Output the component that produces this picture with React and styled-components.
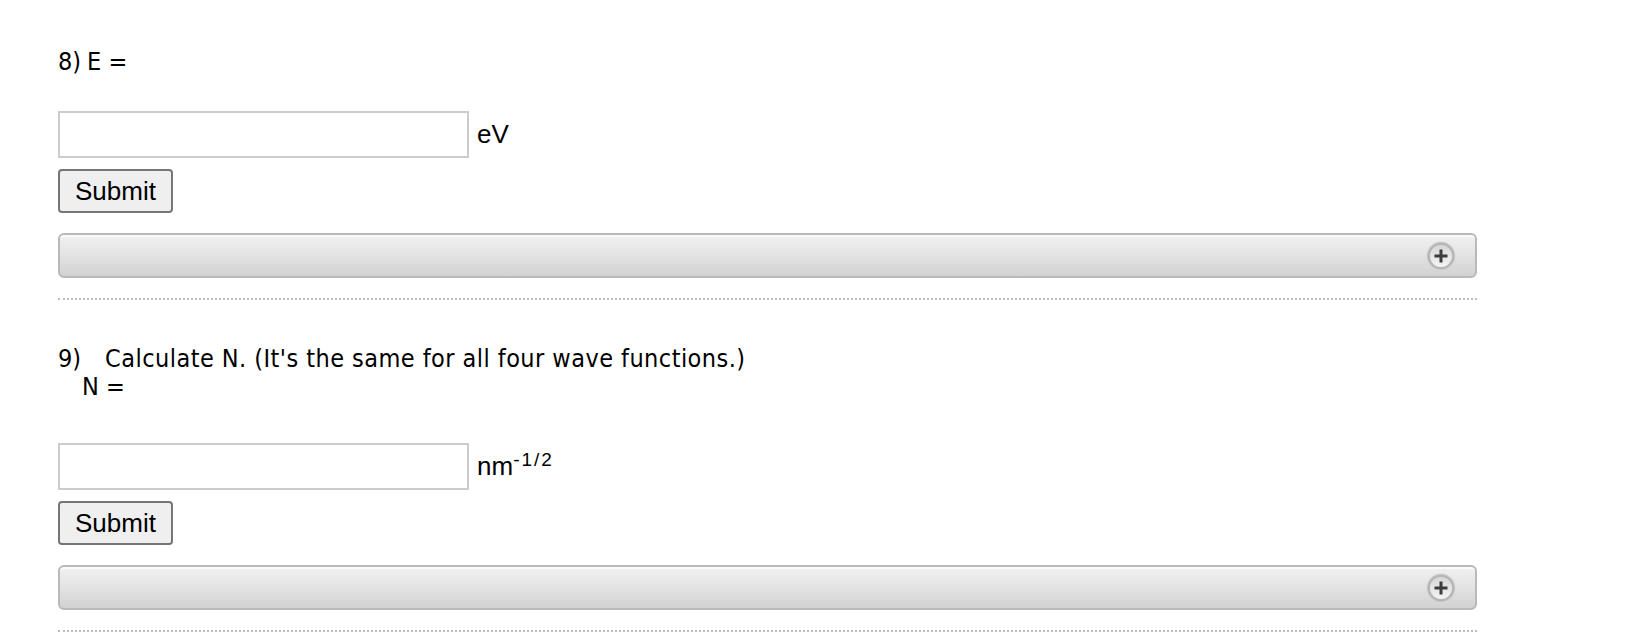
import React from 'react'
import styled, { createGlobalStyle } from 'styled-components'

const GlobalStyle = createGlobalStyle`
  html, body {
    margin: 0;
    padding: 0;
    background: #ffffff;
  }
  body {
    font-family: "DejaVu Sans Condensed", "DejaVu Sans", sans-serif;
    color: #000;
  }
`

const Page = styled.div`
  width: 1419px;
  padding: 48px 0 0 58px;
`

const Question = styled.div`
  display: flex;
  flex-direction: column;
  align-items: flex-start;
  padding-top: ${props => props.gap || 0}px;
`

const Prompt = styled.div`
  font-family: "DejaVu Sans Condensed", "DejaVu Sans", sans-serif;
  font-size: 25px;
  line-height: 28px;
  color: #000;
`

const Number = styled.span`
  display: inline-block;
  margin-right: ${props => props.space || 6}px;
`

const Text = styled.span`
  letter-spacing: ${props => (props.wide ? '0.45px' : '0')};
`

const SubLine = styled.div`
  padding-left: 24px;
`

const AnswerRow = styled.div`
  display: flex;
  align-items: center;
  margin-top: ${props => props.top}px;
`

const Input = styled.input`
  box-sizing: border-box;
  width: 411px;
  height: 47px;
  margin: 0;
  border: 2px solid #cccccc;
  border-radius: 0;
  background: #fff;
  outline: none;
`

const Unit = styled.span`
  font-family: "Liberation Sans", Arial, sans-serif;
  font-size: 26px;
  margin-left: 8px;
  color: #000;
`

const Sup = styled.sup`
  font-size: 19px;
  letter-spacing: 2px;
  vertical-align: 9px;
  line-height: 0;
`

const SubmitButton = styled.button`
  box-sizing: border-box;
  height: 44px;
  margin-top: 11px;
  padding: 0 15px;
  font-family: "Liberation Sans", Arial, sans-serif;
  font-size: 26px;
  color: #000;
  background: #efefef;
  border: 2px solid #767676;
  border-radius: 4px;
  cursor: pointer;
`

const HintBar = styled.div`
  box-sizing: border-box;
  align-self: stretch;
  height: 45px;
  margin-top: 20px;
  display: flex;
  align-items: center;
  justify-content: flex-end;
  padding-right: 19px;
  border: 2px solid #b9b9b9;
  border-radius: 6px;
  background: linear-gradient(to bottom, #f1f1f1 0%, #e4e4e4 45%, #d2d2d2 100%);
  box-shadow: inset 0 2px 0 #fafafa;
`

const Divider = styled.div`
  align-self: stretch;
  margin-top: 20px;
  border-top: 2px dotted #bdbdbd;
`

const PlusIcon = () => (
  <svg width="30" height="30" viewBox="0 0 30 30">
    <defs>
      <radialGradient id="ring" cx="50%" cy="50%" r="50%">
        <stop offset="0%" stopColor="#bdbdbd" />
        <stop offset="72%" stopColor="#bdbdbd" />
        <stop offset="86%" stopColor="#b3b3b3" />
        <stop offset="100%" stopColor="#d8d8d8" />
      </radialGradient>
      <linearGradient id="face" x1="0" y1="0" x2="0" y2="1">
        <stop offset="0%" stopColor="#d6d6d6" />
        <stop offset="100%" stopColor="#f4f4f4" />
      </linearGradient>
    </defs>
    <circle cx="15" cy="15" r="14.5" fill="url(#ring)" />
    <circle cx="15" cy="15" r="11" fill="url(#face)" />
    <path d="M15 8.5 V21.5 M8.5 15 H21.5" stroke="#3c3c3c" strokeWidth="3" />
  </svg>
)

const questions = [
  {
    id: 8,
    lines: ['E ='],
    gap: 0,
    space: 6,
    inputTop: 35,
    unit: <>eV</>,
  },
  {
    id: 9,
    lines: ["Calculate N. (It's the same for all four wave functions.)", 'N ='],
    gap: 45,
    space: 24,
    inputTop: 42,
    unit: <>nm<Sup>-1/2</Sup></>,
  },
]

export default function App() {
  return (
    <>
      <GlobalStyle />
      <Page>
        {questions.map(q => (
          <Question key={q.id} gap={q.gap}>
            <Prompt>
              <Number space={q.space}>{q.id})</Number>
              <Text wide={q.lines.length > 1}>{q.lines[0]}</Text>
              {q.lines.slice(1).map(l => (
                <SubLine key={l}>{l}</SubLine>
              ))}
            </Prompt>
            <AnswerRow top={q.inputTop}>
              <Input type="text" />
              <Unit>{q.unit}</Unit>
            </AnswerRow>
            <SubmitButton>Submit</SubmitButton>
            <HintBar>
              <PlusIcon />
            </HintBar>
            <Divider />
          </Question>
        ))}
      </Page>
    </>
  )
}
